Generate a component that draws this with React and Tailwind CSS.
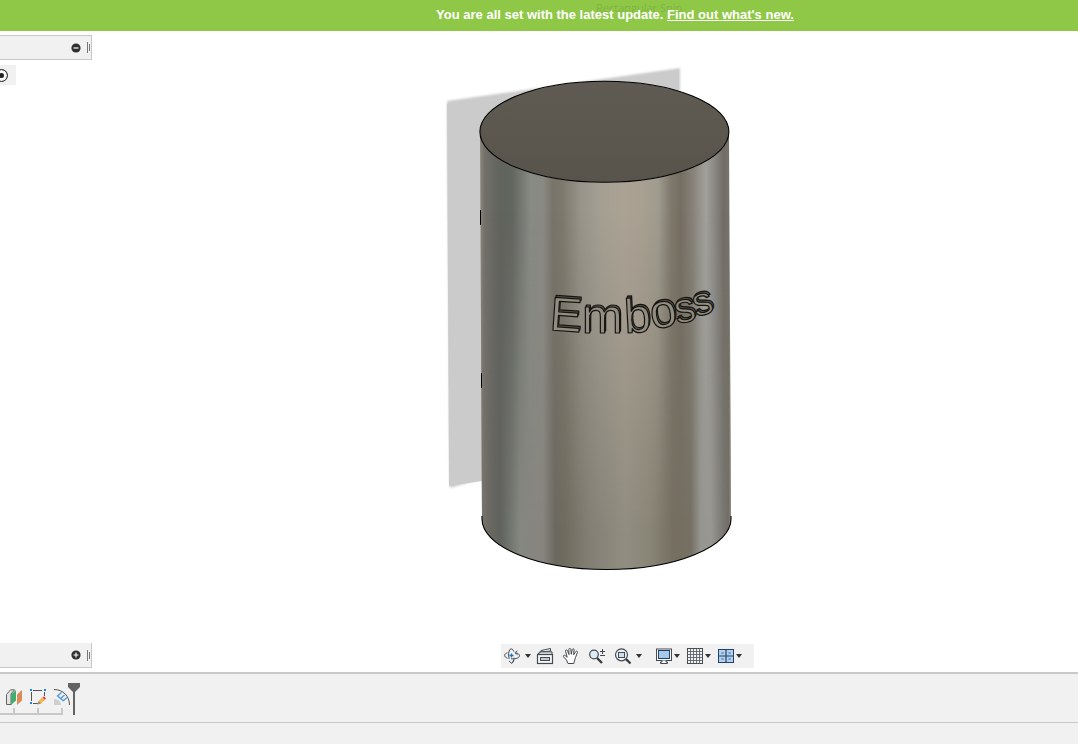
import { useState } from "react";

const topStops = [
  [0, "#8a8679"],
  [2, "#716f68"],
  [8, "#61635d"],
  [13, "#63655f"],
  [20, "#878983"],
  [25, "#8a8a84"],
  [29, "#787469"],
  [33, "#7e796d"],
  [40, "#98948a"],
  [48, "#a49f93"],
  [56, "#aba294"],
  [64, "#a9a092"],
  [71, "#9f9b8e"],
  [76, "#7f796d"],
  [80, "#756d62"],
  [85, "#87837a"],
  [90, "#a1a19b"],
  [94, "#85847e"],
  [97, "#716d65"],
  [99, "#77736b"],
  [100, "#9a9284"],
];

const bottomStops = [
  [0, "#8c8678"],
  [1, "#77736c"],
  [4, "#6a6862"],
  [8, "#60625d"],
  [16, "#858781"],
  [25, "#87857e"],
  [30, "#6b6860"],
  [34, "#706c5f"],
  [44, "#837f75"],
  [58, "#918d80"],
  [68, "#888476"],
  [77, "#756e61"],
  [84, "#757063"],
  [88, "#969690"],
  [92, "#989791"],
  [97, "#797771"],
  [99, "#716d65"],
  [100, "#948c7e"],
];

// one entry per letter, climbing around the side of the body
const letters = [
  { char: "E", x: 549, y: 330, size: 48, rotate: 4 },
  { char: "m", x: 582, y: 333, size: 49, rotate: 0 },
  { char: "b", x: 625, y: 333, size: 48, rotate: -3 },
  { char: "o", x: 652, y: 329, size: 48, rotate: -8 },
  { char: "s", x: 677, y: 324, size: 42, rotate: -12 },
  { char: "s", x: 696, y: 317, size: 40, rotate: -16 },
];

function Word({ dx, dy, fill }) {
  return (
    <g
      transform={`translate(${dx} ${dy})`}
      fill={fill}
      stroke="#15140f"
      strokeWidth="1.2"
      strokeLinejoin="round"
    >
      {letters.map((l, i) => (
        <text
          key={i}
          fontFamily="Liberation Sans, Arial, sans-serif"
          fontSize={l.size}
          transform={`translate(${l.x} ${l.y}) rotate(${l.rotate})`}
        >
          {l.char}
        </text>
      ))}
    </g>
  );
}

function Model() {
  const body =
    "M480 132 A124.5 50.5 0 0 0 729 132 L731 519 A124.5 50.5 0 0 1 482 519 Z";
  return (
    <svg
      className="mt-[29px] w-[300px] shrink-0"
      viewBox="435 60 300 520"
      role="img"
      aria-label="Emboss"
    >
      <defs>
        <linearGradient id="metalTop">
          {topStops.map(([offset, color]) => (
            <stop key={offset} offset={`${offset}%`} stopColor={color} />
          ))}
        </linearGradient>
        <linearGradient id="metalBottom">
          {bottomStops.map(([offset, color]) => (
            <stop key={offset} offset={`${offset}%`} stopColor={color} />
          ))}
        </linearGradient>
        <linearGradient id="fade" x1="0" y1="0" x2="0" y2="1">
          <stop offset="20%" stopColor="#000" />
          <stop offset="90%" stopColor="#fff" />
        </linearGradient>
        <linearGradient id="cap" x1="0" y1="0" x2="0" y2="1">
          <stop offset="0" stopColor="#5f5b53" />
          <stop offset="1" stopColor="#58544b" />
        </linearGradient>
        <mask id="fadeMask">
          <rect x="470" y="120" width="270" height="460" fill="url(#fade)" />
        </mask>
        <filter id="soft">
          <feGaussianBlur stdDeviation="1.3" />
        </filter>
      </defs>

      <path d="M447 101 L680 68 V420 L450 488 Z" fill="#cbcbcb" filter="url(#soft)" />
      <path d="M447 104 L679 72 V420 L482 481 L449 486 Z" fill="#cbcbcb" />

      <path d={body} fill="url(#metalTop)" />
      <g mask="url(#fadeMask)">
        <path d={body} fill="url(#metalBottom)" />
      </g>
      <ellipse
        cx="604.4"
        cy="131.8"
        rx="124.5"
        ry="50.5"
        fill="url(#cap)"
        stroke="#000"
        strokeWidth="1.1"
      />
      <path
        d="M482 516 V519 A124.5 50.5 0 0 0 731 519 V516"
        fill="none"
        stroke="#000"
        strokeWidth="1.1"
      />
      <path d="M480.5 210 V225 M481.5 373 V388" stroke="#000" />

      <Word dx={1} dy={-2} fill="#5b574e" />
      <Word dx={0} dy={0} fill="#928d82" />
    </svg>
  );
}

function Caret() {
  return (
    <svg className="h-1 w-[6px]" viewBox="0 0 6 4">
      <path d="M0 0 H6 L3 4 Z" fill="#333" />
    </svg>
  );
}

function Icon({ children }) {
  return (
    <svg className="size-[18px]" viewBox="0 0 18 18" fill="none" stroke="#444a50">
      {children}
    </svg>
  );
}

function OrbitIcon() {
  return (
    <Icon>
      <path d="M6.2 12 C5 8 5.5 4 7.3 2.2 C8.6 1.2 10.2 2.4 10.8 4.6" />
      <path d="M6 14 L8.8 16.4 L11 13.2 M8.8 16.2 C10.2 15.5 10.9 13 11 10.8" />
      <path d="M4.5 5.8 C0.8 6.8 0.5 9.8 4.5 11.2" />
      <path d="M8 11.8 C13 12.2 16.6 10.8 16.5 8.6 C16.4 7.2 15 6.2 12.6 5.8" />
      <path d="M14.2 3.6 L12 5.8 L14.6 7.8" />
      <path d="M6.5 8.5 H10.5 M8.5 6.5 V10.5" stroke="#1877c9" strokeWidth="1.3" />
    </Icon>
  );
}

function LookAtIcon() {
  return (
    <Icon>
      <path d="M1.5 7.5 L5 3.5 L14.5 1.5 V4 L5 4.8" fill="#fff" />
      <path d="M1.5 7.5 L5 4.8 H16 V7" fill="#dfe3e6" />
      <rect x="1.5" y="7.5" width="15" height="9" fill="#f5f6f7" strokeWidth="1.2" />
      <rect x="4.5" y="10.5" width="9" height="3" fill="#c3c9ce" />
    </Icon>
  );
}

function PanIcon() {
  return (
    <Icon>
      <path
        d="M6 16.5 L4.5 13 L1.5 9.8 C0.8 8.6 2.2 7.8 3.2 8.6 L5.2 10.2 L3.5 4.2 C3.2 2.8 5 2.4 5.5 3.7 L7 7.5 L6.8 2.5 C6.8 1.1 8.6 1.1 8.8 2.4 L9.3 7.3 L10.3 2.6 C10.6 1.3 12.3 1.7 12.1 3 L11.6 7.8 L13.7 4.6 C14.4 3.5 16 4.4 15.4 5.6 L13.5 10.5 L12.4 14 L11.8 16.5 Z"
        fill="#fff"
        strokeLinejoin="round"
      />
    </Icon>
  );
}

function ZoomIcon() {
  return (
    <Icon>
      <circle cx="6" cy="7.5" r="4.3" fill="#dcebf5" strokeWidth="1.2" />
      <path d="M9 11 L14 16" strokeWidth="2.4" stroke="#3a3f44" />
      <path d="M12 4.5 H17 M14.5 2 V7 M12 8.5 H17" />
    </Icon>
  );
}

function FitIcon() {
  return (
    <Icon>
      <circle cx="7.5" cy="7.8" r="6" fill="#eef3f6" strokeWidth="1.2" />
      <rect x="4.5" y="5.5" width="6" height="5" fill="#cfe0ec" />
      <path d="M12 12.2 L16.5 16.5" strokeWidth="2.4" stroke="#3a3f44" />
    </Icon>
  );
}

function DisplayIcon() {
  return (
    <Icon>
      <rect x="1.5" y="2" width="15" height="11.5" fill="#fff" />
      <rect x="3.5" y="3.5" width="11" height="8" fill="#a9c9ea" stroke="#23426b" />
      <path d="M7 13.5 V15 H5.5 V16.5 H12.5 V15 H11 V13.5" fill="#fff" />
    </Icon>
  );
}

function GridIcon() {
  return (
    <Icon>
      <rect x="1.5" y="1.5" width="15" height="15" fill="#f4f5f6" />
      <path
        d="M4.5 1.5 V16.5 M7.5 1.5 V16.5 M10.5 1.5 V16.5 M13.5 1.5 V16.5 M1.5 4.5 H16.5 M1.5 7.5 H16.5 M1.5 10.5 H16.5 M1.5 13.5 H16.5"
        stroke="#666c73"
      />
    </Icon>
  );
}

function ViewportsIcon() {
  return (
    <Icon>
      <rect x="1.5" y="2.5" width="15" height="13" fill="#b4d0ec" stroke="#23426b" />
      <path d="M9 2.5 V15.5 M1.5 9 H16.5" stroke="#23426b" strokeWidth="1.2" />
      <path
        d="M4.5 5.5 H6.5 V6.5 H4.5 Z M11.5 5.5 H13.5 V6.5 H11.5 Z M4.5 11.5 H6.5 V12.5 H4.5 Z M11.5 11.5 H13.5 V12.5 H11.5 Z"
        stroke="#7ba3cb"
      />
    </Icon>
  );
}

function Tool({ label, menu, tight, children }) {
  return (
    <button
      type="button"
      aria-label={label}
      className={`flex items-center ${tight ? "gap-px" : "gap-1"}`}
    >
      {children}
      {menu && <Caret />}
    </button>
  );
}

function NavigationBar() {
  return (
    <nav className="flex h-6 items-center gap-[13px] bg-[#f1f1f1] pr-3 pl-[2px]">
      <div className="flex gap-2">
        <div className="flex gap-[5px]">
          <Tool label="Orbit" menu>
            <OrbitIcon />
          </Tool>
          <Tool label="Look At">
            <LookAtIcon />
          </Tool>
        </div>
        <Tool label="Pan">
          <PanIcon />
        </Tool>
        <Tool label="Zoom">
          <ZoomIcon />
        </Tool>
        <Tool label="Fit" menu>
          <FitIcon />
        </Tool>
      </div>
      <div className="flex gap-[6px]">
        <Tool label="Display Settings" menu tight>
          <DisplayIcon />
        </Tool>
        <Tool label="Grid and Snaps" menu tight>
          <GridIcon />
        </Tool>
        <Tool label="Viewports" menu tight>
          <ViewportsIcon />
        </Tool>
      </div>
    </nav>
  );
}

function PanelHeader({ label, open, onToggle, border }) {
  return (
    <div
      className={`flex h-[25px] items-center justify-end gap-[6px] border-[#c8c8c8] bg-[#f1f1f1] ${border}`}
    >
      <button type="button" aria-label={label} aria-expanded={open} onClick={onToggle}>
        <svg className="size-[10px]" viewBox="0 0 10 10">
          <circle cx="5" cy="5" r="4.6" fill="#2f2f2f" />
          <path d={open ? "M2.5 5 H7.5" : "M2.5 5 H7.5 M5 2.5 V7.5"} stroke="#fff" strokeWidth="1.2" />
        </svg>
      </button>
      <svg className="h-[11px] w-1" viewBox="0 0 4 11">
        <path d="M0.5 0 V11 M2.5 2 V9" stroke="#777" />
      </svg>
    </div>
  );
}

function SidePanels() {
  const [browserOpen, setBrowserOpen] = useState(true);
  const [commentsOpen, setCommentsOpen] = useState(false);

  return (
    <aside className="flex w-[92px] shrink-0 flex-col py-1">
      <PanelHeader
        label="Browser"
        open={browserOpen}
        onToggle={() => setBrowserOpen(!browserOpen)}
        border="border-y border-r"
      />
      {browserOpen && (
        <label className="mt-[5px] flex h-5 w-4 items-center overflow-hidden bg-[#f1f1f1]">
          <input
            type="radio"
            name="component"
            aria-label="Activate component"
            defaultChecked
            className="-ml-[5px] size-[13px] shrink-0 appearance-none rounded-full border border-[#333] bg-[#f1f1f1] shadow-[inset_0_0_0_3px_#f8f8f8] checked:bg-[#222]"
          />
        </label>
      )}
      <div className="mt-auto">
        <PanelHeader
          label="Comments"
          open={commentsOpen}
          onToggle={() => setCommentsOpen(!commentsOpen)}
          border="border-b border-r"
        />
      </div>
    </aside>
  );
}

function Timeline() {
  return (
    <footer className="border-t-2 border-[#c8c8c8] bg-[#f1f1f1]">
      <div className="box-content flex h-12 border-b border-[#c8c8c8]">
        <div className="flex flex-col gap-[3px] pt-[15px]">
          <div className="flex pl-[2px]">
            <button type="button" aria-label="Plane" className="flex w-6 justify-center">
              <svg className="size-4" viewBox="0 0 16 16">
                <path d="M0.5 15.5 V5.5 L4.5 0.8 H8.5 L5 5 V15.5 Z" fill="#e3e3e3" stroke="#666" />
                <path d="M5 5.5 L10 1 V11.5 L5 16 Z" fill="#3fae70" />
                <path d="M11 5.5 L16 1 V11.5 L11 16 Z" fill="#dc8a58" />
              </svg>
            </button>
            <button type="button" aria-label="Sketch" className="flex w-6 justify-center">
              <svg className="size-4" viewBox="0 0 16 16">
                <path d="M3 1.5 H12 M1.5 3 V12 M14.5 3 V7 M3 14.5 H8" stroke="#555" />
                <path d="M0 0 H2 V2 H0 Z M14 0 H16 V2 H14 Z M0 13 H2 V15 H0 Z" fill="#1683e8" />
                <path d="M7.5 15.5 L8.5 12 L12.5 8.2 L15 10.8 L11 14.5 Z" fill="#f4b74a" />
                <path d="M7.5 15.5 L8.5 12 L11 14.5 Z" fill="#9a8c78" />
                <path d="M12.5 8.5 L14 7.2 L16 9.2 L14.8 10.8 Z" fill="#e8434b" />
              </svg>
            </button>
            <button type="button" aria-label="Emboss" className="flex w-6 justify-center">
              <svg className="size-4" viewBox="0 0 16 16">
                <path d="M0 10 C4 10 7 12.5 7 16 H0 Z" fill="#cfcfcf" />
                <path d="M0 0.5 C9 0.5 15.5 7 15.5 16" fill="none" stroke="#555" />
                <path
                  d="M3 6.5 L9.5 12 M3.5 7 L7.5 3.5 M6.5 9.5 L10.5 6 M9 12 L13 8.5"
                  fill="none"
                  stroke="#5a9fdc"
                  strokeWidth="1.6"
                />
              </svg>
            </button>
          </div>
          <svg className="h-[7px] w-16" viewBox="0 0 64 7">
            <path d="M0 6 H63 M14 0 V6 M38 0 V6 M62 0 V6" fill="none" stroke="#c8c8c8" strokeWidth="2" />
          </svg>
        </div>
        <button type="button" aria-label="Timeline marker" className="-ml-[6px] self-start pt-[9px]">
          <svg className="h-8 w-3" viewBox="0 0 12 32">
            <path d="M0 0 H12 V4 L7 9 V32 H5 V9 L0 4 Z" fill="#636363" />
          </svg>
        </button>
      </div>
      <div className="h-[21px]" />
    </footer>
  );
}

export default function App() {
  return (
    <div className="flex min-h-screen flex-col bg-white font-['Liberation_Sans',Arial,sans-serif]">
      <header className="relative flex h-[31px] items-center justify-center bg-[#8fc847] pb-[2px] pl-[152px] text-[13px] font-bold text-white">
        <span
          aria-hidden="true"
          className="absolute top-0 left-[596px] font-['Open_Sans',sans-serif] text-[11px] leading-4 font-normal text-[#7fb441]"
        >
          Rectangular Snip
        </span>
        <p className="relative">
          You are all set with the latest update.{" "}
          <a href="#" className="underline">
            Find out what's new.
          </a>
        </p>
      </header>
      <main className="flex flex-1">
        <SidePanels />
        <section className="flex flex-1 flex-col items-center pb-1">
          <Model />
          <div className="mt-auto pl-[85px]">
            <NavigationBar />
          </div>
        </section>
      </main>
      <Timeline />
    </div>
  );
}
